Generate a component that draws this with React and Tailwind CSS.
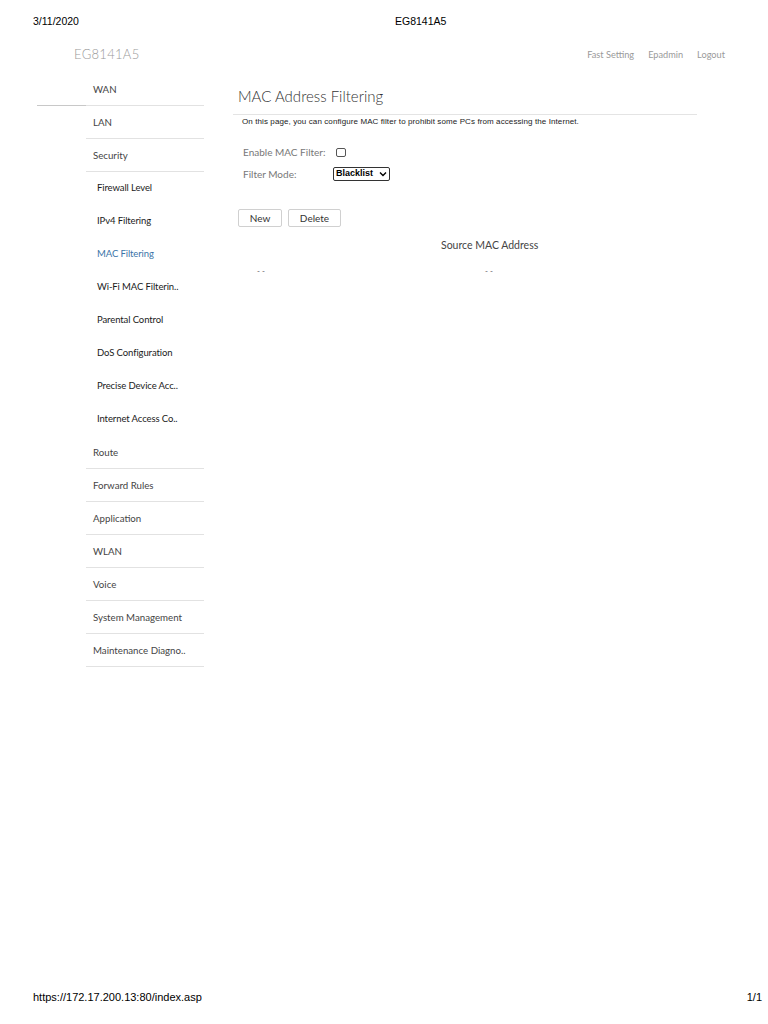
const MENU = [
  { label: 'WAN', top: true, first: true },
  { label: 'LAN', top: true },
  { label: 'Security', top: true },
  { label: 'Firewall Level', sub: true },
  { label: 'IPv4 Filtering', sub: true },
  { label: 'MAC Filtering', sub: true, active: true },
  { label: 'Wi-Fi MAC Filterin..', sub: true },
  { label: 'Parental Control', sub: true },
  { label: 'DoS Configuration', sub: true },
  { label: 'Precise Device Acc..', sub: true },
  { label: 'Internet Access Co..', sub: true, last: true },
  { label: 'Route', top: true },
  { label: 'Forward Rules', top: true },
  { label: 'Application', top: true },
  { label: 'WLAN', top: true },
  { label: 'Voice', top: true },
  { label: 'System Management', top: true },
  { label: 'Maintenance Diagno..', top: true },
];

function MenuRow({ item }) {
  const text = item.sub ? (
    <span
      className={`pl-[11px] text-[9.5px] tracking-[-0.1px] ${item.active ? 'text-[#3a74a8]' : 'text-[#1a1a1a]'}`}
    >
      {item.label}
    </span>
  ) : (
    <span className="pl-[7px] text-[9.7px] text-[#444]">{item.label}</span>
  );
  return (
    <div className="flex h-[33px]">
      <div className={`w-[49px] ${item.first ? 'border-b border-[#c8c8c8]' : ''}`} />
      <div
        className={`flex w-[118px] items-center ${item.top ? 'border-b border-[#e2e2e2]' : ''}`}
      >
        {text}
      </div>
    </div>
  );
}

export default function App() {
  return (
    <div className="relative h-[1024px] w-[768px] bg-white font-['Lato',sans-serif]">
      {/* print header */}
      <div className="flex h-[44px] items-center px-[33px] font-['Liberation_Sans',Arial,sans-serif] text-[10.5px] text-black">
        <span className="w-[80px]">3/11/2020</span>
        <span className="ml-[282px]">EG8141A5</span>
      </div>

      {/* app header */}
      <div className="flex h-[22px] items-center">
        <span className="ml-[74px] text-[13px] font-light tracking-[0.3px] text-[#9a9a9a]">EG8141A5</span>
        <div className="ml-auto mr-[43px] flex gap-[14px] text-[9.2px] text-[#9a9a9a]">
          <span>Fast Setting</span>
          <span>Epadmin</span>
          <span>Logout</span>
        </div>
      </div>

      <div className="mt-[5px] flex">
        <div className="ml-[37px] mt-[2px] w-[167px]">
          {MENU.map((m) => (
            <MenuRow key={m.label} item={m} />
          ))}
        </div>

        <div className="ml-[29px] w-[464px]">
          <div className="mt-[14px] pl-[5px] text-[15px] font-light leading-[22px] text-[#333]">MAC Address Filtering</div>
          <div className="mt-[7px] border-b border-[#e4e4e4]" />
          <div className="mt-[2px] pl-[9px] font-['Liberation_Sans',Arial,sans-serif] text-[8px] leading-[10px] tracking-[0.1px] text-[#222]">
            On this page, you can configure MAC filter to prohibit some PCs from accessing the Internet.
          </div>

          <div className="mt-[18px] flex h-[14px] items-center pl-[10px] text-[10px] text-[#777]">
            <span className="w-[93px]">Enable MAC Filter:</span>
            <span className="h-[9px] w-[10px] rounded-[2px] border border-[#555]" />
          </div>
          <div className="mt-[8px] flex h-[14px] items-center pl-[10px] text-[10px] text-[#777]">
            <span className="w-[90px]">Filter Mode:</span>
            <span className="flex h-[14px] w-[57px] items-center justify-between rounded-[2px] border border-[#333] px-[2px] font-['Liberation_Sans',Arial,sans-serif] text-[9px] font-bold text-black">
              Blacklist
              <svg width="8" height="6" viewBox="0 0 8 6">
                <path d="M1 1.5 L4 4.5 L7 1.5" stroke="#000" strokeWidth="1.4" fill="none" />
              </svg>
            </span>
          </div>

          <div className="mt-[28px] flex gap-[6px] pl-[5px]">
            <span className="flex h-[18px] w-[44px] items-center justify-center rounded-[2px] border border-[#d0d0d0] text-[10px] text-[#333]">
              New
            </span>
            <span className="flex h-[18px] w-[53px] items-center justify-center rounded-[2px] border border-[#d0d0d0] text-[10px] text-[#333]">
              Delete
            </span>
          </div>

          <div className="mt-[12px] flex h-[14px] items-center">
            <span className="ml-[208px] text-[10.5px] text-[#444]">Source MAC Address</span>
          </div>
          <div className="mt-[13px] flex h-[10px] items-center text-[8px] text-[#555]">
            <span className="ml-[24px]">- -</span>
            <span className="ml-[220px]">- -</span>
          </div>
        </div>
      </div>

      {/* print footer */}
      <div className="absolute left-0 right-0 top-[990px] flex h-[14px] items-center pl-[33px] pr-[6px] font-['Liberation_Sans',Arial,sans-serif] text-[11px] text-black">
        <span>https://172.17.200.13:80/index.asp</span>
        <span className="ml-auto">1/1</span>
      </div>
    </div>
  );
}
